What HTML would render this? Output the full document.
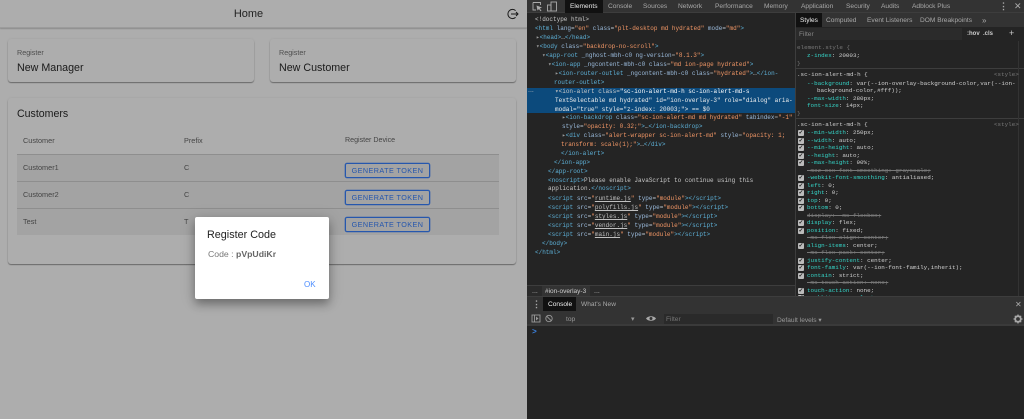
<!DOCTYPE html>
<html><head><meta charset="utf-8"><style>
*{box-sizing:border-box}
html,body{margin:0;padding:0;width:1024px;height:419px;overflow:hidden;background:#242424;font-family:"Liberation Sans",sans-serif}
.a{position:absolute;white-space:nowrap}
#left{position:absolute;left:0;top:0;width:527px;height:419px;background:#fff;overflow:hidden;filter:blur(.3px)}
.card{position:absolute;background:#fff;border-radius:3px;box-shadow:0 1px 1px rgba(0,0,0,.38),0 0 2px rgba(0,0,0,.08)}
.row{position:absolute;left:17px;width:482px;height:27px;background:#f0f0f0;border-top:1px solid #d2d2d2}
.btn{position:absolute;left:345px;width:85px;height:15px;border:1px solid #3880ff;border-radius:2px;color:#3880ff;font-size:7.2px;letter-spacing:.45px;text-align:center;line-height:13px;font-weight:500;box-shadow:0 0 0 .3px #3880ff}
.cell{position:absolute;font-size:7.3px;color:#666;white-space:nowrap}
#ov{position:absolute;left:0;top:0;width:527px;height:419px;background:rgba(0,0,0,.32)}
#dlg{position:absolute;left:195px;top:217px;width:134px;height:82px;background:#fff;border-radius:2px;box-shadow:0 5px 9px rgba(0,0,0,.3),0 2px 16px rgba(0,0,0,.15)}
#dev{position:absolute;left:527px;top:0;width:497px;height:419px;background:#242424;overflow:hidden;font-family:"Liberation Sans",sans-serif;filter:blur(.3px)}
.bar{position:absolute;background:#333}
.tab{position:absolute;font-size:6.6px;color:#a8a8a8;white-space:nowrap}
.m{position:absolute;font-family:"Liberation Mono",monospace;font-size:6px;line-height:9px;white-space:nowrap;color:#bdc6cf}
.t{color:#5db0d7}.n{color:#9bbbdc}.v{color:#f29766}.w{color:#c8c8c8}.l{color:#c0c0c0;text-decoration:underline}
.s{position:absolute;font-family:"Liberation Mono",monospace;font-size:5.9px;line-height:8px;white-space:nowrap;color:#d0d0d0;transform:translate(-1px,1px)}
.p{color:#35d4c7}.g{color:#777}.x{color:#777;text-decoration:line-through}
.c{position:absolute;left:2px;width:6px;height:6px;background:#bbb;border-radius:1px;color:#222;font-size:6px;line-height:6px;text-align:center;font-weight:bold;transform:translateY(1px)}
</style></head><body>
<div id="left">
<div class="a" style="left:0;top:0;width:527px;height:28px;background:#fff;border-bottom:1px solid #e6e6e6;box-shadow:0 1px 1px rgba(0,0,0,.2)"></div>
<div class="a" style="left:0;width:497px;top:8px;text-align:center;font-size:11px;line-height:13px;color:#333">Home</div>
<svg class="a" style="left:505px;top:6.500px" width="14" height="14" viewBox="0 0 14 14" fill="none" stroke="#222" stroke-width="1"><path d="M10.600 3.600A4.600 4.600 0 1 0 10.600 10.400"/><path d="M6 7H13M11 5L13 7L11 9"/></svg>
<div class="card" style="left:8px;top:39px;width:246px;height:43px"></div>
<div class="a" style="left:17px;top:48px;font-size:7.200px;color:#737373">Register</div>
<div class="a" style="left:17px;top:62px;font-size:10.700px;color:#2a2a2a">New Manager</div>
<div class="card" style="left:270px;top:39px;width:246px;height:43px"></div>
<div class="a" style="left:279px;top:48px;font-size:7.200px;color:#737373">Register</div>
<div class="a" style="left:279px;top:62px;font-size:10.700px;color:#2a2a2a">New Customer</div>
<div class="card" style="left:8px;top:98px;width:508px;height:166px"></div>
<div class="a" style="left:17px;top:108px;font-size:10.600px;color:#2a2a2a">Customers</div>
<div class="cell" style="left:23px;top:136px">Customer</div>
<div class="cell" style="left:184px;top:136px">Prefix</div>
<div class="cell" style="left:345px;top:136px;font-size:7.100px">Register Device</div>
<div class="row" style="top:154px"></div>
<div class="row" style="top:181px"></div>
<div class="row" style="top:208px"></div>
<div class="cell" style="left:23px;top:163px">Customer1</div>
<div class="cell" style="left:184px;top:163px">C</div>
<div class="btn" style="top:163px">GENERATE TOKEN</div>
<div class="cell" style="left:23px;top:190px">Customer2</div>
<div class="cell" style="left:184px;top:190px">C</div>
<div class="btn" style="top:190px">GENERATE TOKEN</div>
<div class="cell" style="left:23px;top:217px">Test</div>
<div class="cell" style="left:184px;top:217px">T</div>
<div class="btn" style="top:217px">GENERATE TOKEN</div>
<div id="ov"></div>
<div id="dlg">
<div class="a" style="left:12px;top:11.500px;font-size:10.800px;line-height:13px;color:#222">Register Code</div>
<div class="a" style="left:13px;top:32px;font-size:8.700px;line-height:10px;color:#777">Code : <b style="color:#666">pVpUdiKr</b></div>
<div class="a" style="left:109px;top:62.500px;font-size:8px;line-height:10px;color:#4d8dff">OK</div>
</div>
</div>
<div id="dev">
<div class="bar" style="left:0;top:0;width:497px;height:13px;border-bottom:1px solid #3d3d3d"></div>
<svg class="a" style="left:5px;top:1px" width="32" height="11" viewBox="0 0 32 11" fill="none" stroke="#aaa" stroke-width=".9"><path d="M1 1.500H8.500V4M1 1.500V9H4"/><path d="M4.500 4.500L10 6.500L7.800 7.500L9.500 9.800L8.500 10.300L7 8L5.500 9.500Z" fill="#aaa" stroke="none"/><rect x="19" y="1" width="5.500" height="9"/><rect x="15.500" y="4" width="3.500" height="6"/></svg>
<div class="a" style="left:38px;top:0;width:38px;height:13px;background:#111"></div>
<div class="tab" style="left:43px;top:2.500px;color:#eee">Elements</div>
<div class="tab" style="left:81px;top:2.500px">Console</div>
<div class="tab" style="left:116px;top:2.500px">Sources</div>
<div class="tab" style="left:151px;top:2.500px">Network</div>
<div class="tab" style="left:188px;top:2.500px">Performance</div>
<div class="tab" style="left:237px;top:2.500px">Memory</div>
<div class="tab" style="left:274px;top:2.500px">Application</div>
<div class="tab" style="left:319px;top:2.500px">Security</div>
<div class="tab" style="left:354px;top:2.500px">Audits</div>
<div class="tab" style="left:385px;top:2.500px">Adblock Plus</div>
<div class="a" style="left:472px;top:1px;font-size:9px;color:#aaa;font-weight:bold">&#8942;</div>
<div class="a" style="left:487px;top:1px;font-size:9px;color:#aaa">&#10005;</div>

<div class="a" style="left:0;top:88px;width:268px;height:25px;background:#0c4a7c"></div>
<div class="a" style="left:1px;top:87px;font-size:7px;color:#bbb">...</div>

<div class="m" style="left:8px;top:15px;color:#c8c8c8">&lt;!doctype html&gt;</div>
<div class="m" style="left:8px;top:24px"><span class="t">&lt;html</span> <span class="n">lang</span>=<span class="v">"en"</span> <span class="n">class</span>=<span class="v">"plt-desktop md hydrated"</span> <span class="n">mode</span>=<span class="v">"md"</span><span class="t">&gt;</span></div>
<div class="m" style="left:9px;top:33px;color:#999">&#9656;<span class="t">&lt;head&gt;</span><span class="w">&hellip;</span><span class="t">&lt;/head&gt;</span></div>
<div class="m" style="left:9px;top:42px;color:#999">&#9662;<span class="t">&lt;body</span> <span class="n">class</span>=<span class="v">"backdrop-no-scroll"</span><span class="t">&gt;</span></div>
<div class="m" style="left:15px;top:51px;color:#999">&#9662;<span class="t">&lt;app-root</span> <span class="n">_nghost-mbh-c0 ng-version</span>=<span class="v">"8.1.3"</span><span class="t">&gt;</span></div>
<div class="m" style="left:21px;top:60px;color:#999">&#9662;<span class="t">&lt;ion-app</span> <span class="n">_ngcontent-mbh-c0 class</span>=<span class="v">"md ion-page hydrated"</span><span class="t">&gt;</span></div>
<div class="m" style="left:28px;top:69px;color:#999">&#9656;<span class="t">&lt;ion-router-outlet</span> <span class="n">_ngcontent-mbh-c0 class</span>=<span class="v">"hydrated"</span><span class="t">&gt;</span><span class="w">&hellip;</span><span class="t">&lt;/ion-</span></div>
<div class="m t" style="left:27px;top:78px">router-outlet&gt;</div>
<div class="m" style="left:28px;top:87px;color:#ccc"><span style="color:#bbb">&#9662;</span><span class="w">&lt;ion-alert</span> class=<span style="color:#fff">"sc-ion-alert-md-h sc-ion-alert-md-s</span></div>
<div class="m" style="left:28px;top:96px;color:#eee">TextSelectable md hydrated" id="ion-overlay-3" role="dialog" aria-</div>
<div class="m" style="left:28px;top:105px;color:#eee">modal="true" style="z-index: 20003;"&gt; == $0</div>
<div class="m" style="left:35px;top:113px;color:#999">&#9656;<span class="t">&lt;ion-backdrop</span> <span class="n">class</span>=<span class="v">"sc-ion-alert-md md hydrated"</span> <span class="n">tabindex</span>=<span class="v">"-1"</span></div>
<div class="m" style="left:35px;top:122px"><span class="n">style</span>=<span class="v">"opacity: 0.32;"</span><span class="t">&gt;</span><span class="w">&hellip;</span><span class="t">&lt;/ion-backdrop&gt;</span></div>
<div class="m" style="left:35px;top:131px;color:#999">&#9656;<span class="t">&lt;div</span> <span class="n">class</span>=<span class="v">"alert-wrapper sc-ion-alert-md"</span> <span class="n">style</span>=<span class="v">"opacity: 1;</span></div>
<div class="m" style="left:34px;top:140px"><span class="v">transform: scale(1);"</span><span class="t">&gt;</span><span class="w">&hellip;</span><span class="t">&lt;/div&gt;</span></div>
<div class="m t" style="left:34px;top:149px">&lt;/ion-alert&gt;</div>
<div class="m t" style="left:27px;top:158px">&lt;/ion-app&gt;</div>
<div class="m t" style="left:21px;top:167px">&lt;/app-root&gt;</div>
<div class="m" style="left:21px;top:176px"><span class="t">&lt;noscript&gt;</span><span class="w">Please enable JavaScript to continue using this</span></div>
<div class="m" style="left:21px;top:184px"><span class="w">application.</span><span class="t">&lt;/noscript&gt;</span></div>
<div class="m" style="left:21px;top:194px"><span class="t">&lt;script</span> <span class="n">src</span>=<span class="v">"</span><span class="l">runtime.js</span><span class="v">"</span> <span class="n">type</span>=<span class="v">"module"</span><span class="t">&gt;&lt;/script&gt;</span></div>
<div class="m" style="left:21px;top:203px"><span class="t">&lt;script</span> <span class="n">src</span>=<span class="v">"</span><span class="l">polyfills.js</span><span class="v">"</span> <span class="n">type</span>=<span class="v">"module"</span><span class="t">&gt;&lt;/script&gt;</span></div>
<div class="m" style="left:21px;top:212px"><span class="t">&lt;script</span> <span class="n">src</span>=<span class="v">"</span><span class="l">styles.js</span><span class="v">"</span> <span class="n">type</span>=<span class="v">"module"</span><span class="t">&gt;&lt;/script&gt;</span></div>
<div class="m" style="left:21px;top:221px"><span class="t">&lt;script</span> <span class="n">src</span>=<span class="v">"</span><span class="l">vendor.js</span><span class="v">"</span> <span class="n">type</span>=<span class="v">"module"</span><span class="t">&gt;&lt;/script&gt;</span></div>
<div class="m" style="left:21px;top:230px"><span class="t">&lt;script</span> <span class="n">src</span>=<span class="v">"</span><span class="l">main.js</span><span class="v">"</span> <span class="n">type</span>=<span class="v">"module"</span><span class="t">&gt;&lt;/script&gt;</span></div>
<div class="m t" style="left:15px;top:239px">&lt;/body&gt;</div>
<div class="m t" style="left:8px;top:248px">&lt;/html&gt;</div>

<div class="a" style="left:0;top:285px;width:268px;height:12px;background:#2a2a2a;border-top:1px solid #3d3d3d"></div>
<div class="a" style="left:5px;top:288px;font-size:7px;color:#bbb">...</div>
<div class="a" style="left:15px;top:286px;width:48px;height:11px;background:#333"></div>
<div class="a" style="left:18px;top:288px;font-size:6.500px;color:#ccc">#ion-overlay-3</div>
<div class="a" style="left:67px;top:288px;font-size:7px;color:#bbb">...</div>

<!-- styles pane -->
<div id="sty" style="position:absolute;left:268px;top:13px;width:229px;height:284px;background:#242424;border-left:1px solid #3d3d3d;overflow:hidden">
<div style="position:absolute;left:0;top:0;width:229px;height:14px;background:#333"></div>
<div style="position:absolute;left:0;top:0;width:26px;height:14px;background:#111"></div>
<div class="tab" style="left:4px;top:4px;color:#eee">Styles</div>
<div class="tab" style="left:30px;top:4px">Computed</div>
<div class="tab" style="left:71px;top:4px">Event Listeners</div>
<div class="tab" style="left:124px;top:4px">DOM Breakpoints</div>
<div class="tab" style="left:186px;top:3px;font-size:8px">&#187;</div>
<div style="position:absolute;left:0;top:15px;width:166px;height:12px;background:#2b2b2b"></div>
<div class="tab" style="left:3px;top:18px;color:#888">Filter</div>
<div class="tab" style="left:171px;top:18px;color:#ccc;font-weight:bold;font-size:6px">:hov</div>
<div class="tab" style="left:187px;top:18px;color:#ccc;font-weight:bold;font-size:6px">.cls</div>
<div class="tab" style="left:213px;top:15px;color:#ccc;font-size:9px">+</div>
<div style="position:absolute;left:0;top:55px;width:229px;height:1px;background:#3d3d3d"></div>
<div style="position:absolute;left:0;top:105px;width:229px;height:1px;background:#3d3d3d"></div>
<div style="position:absolute;left:222px;top:28px;width:1px;height:256px;background:#333"></div>

<div class="s g" style="left:2px;top:30px">element.style {</div>
<div class="s" style="left:12px;top:38px"><span class="p">z-index</span>: 20003;</div>
<div class="s g" style="left:2px;top:46px">}</div>
<div class="s" style="left:2px;top:57px">.sc-ion-alert-md-h {</div><div class="s g" style="left:199px;top:57px">&lt;style&gt;</div>
<div class="s" style="left:12px;top:66px"><span class="p">--background</span>: var(--ion-overlay-background-color,var(--ion-</div>
<div class="s" style="left:22px;top:73px">background-color,#fff));</div>
<div class="s" style="left:12px;top:81px"><span class="p">--max-width</span>: 280px;</div>
<div class="s" style="left:12px;top:88px"><span class="p">font-size</span>: 14px;</div>
<div class="s g" style="left:2px;top:96px">}</div>
<div class="s" style="left:2px;top:107px">.sc-ion-alert-md-h {</div><div class="s g" style="left:199px;top:107px">&lt;style&gt;</div>

<div class="c" style="top:116px">&#10003;</div><div class="s" style="left:12px;top:115px"><span class="p">--min-width</span>: 250px;</div>
<div class="c" style="top:124px">&#10003;</div><div class="s" style="left:12px;top:123px"><span class="p">--width</span>: auto;</div>
<div class="c" style="top:131px">&#10003;</div><div class="s" style="left:12px;top:130px"><span class="p">--min-height</span>: auto;</div>
<div class="c" style="top:139px">&#10003;</div><div class="s" style="left:12px;top:138px"><span class="p">--height</span>: auto;</div>
<div class="c" style="top:146px">&#10003;</div><div class="s" style="left:12px;top:145px"><span class="p">--max-height</span>: 90%;</div>
<div class="s x" style="left:12px;top:153px">-moz-osx-font-smoothing: grayscale;</div>
<div class="c" style="top:161px">&#10003;</div><div class="s" style="left:12px;top:160px"><span class="p">-webkit-font-smoothing</span>: antialiased;</div>
<div class="c" style="top:169px">&#10003;</div><div class="s" style="left:12px;top:168px"><span class="p">left</span>: 0;</div>
<div class="c" style="top:176px">&#10003;</div><div class="s" style="left:12px;top:175px"><span class="p">right</span>: 0;</div>
<div class="c" style="top:184px">&#10003;</div><div class="s" style="left:12px;top:183px"><span class="p">top</span>: 0;</div>
<div class="c" style="top:191px">&#10003;</div><div class="s" style="left:12px;top:190px"><span class="p">bottom</span>: 0;</div>
<div class="s x" style="left:12px;top:198px">display: -ms-flexbox;</div>
<div class="c" style="top:206px">&#10003;</div><div class="s" style="left:12px;top:205px"><span class="p">display</span>: flex;</div>
<div class="c" style="top:214px">&#10003;</div><div class="s" style="left:12px;top:213px"><span class="p">position</span>: fixed;</div>
<div class="s x" style="left:12px;top:220px">-ms-flex-align: center;</div>
<div class="c" style="top:229px">&#10003;</div><div class="s" style="left:12px;top:228px"><span class="p">align-items</span>: center;</div>
<div class="s x" style="left:12px;top:235px">-ms-flex-pack: center;</div>
<div class="c" style="top:244px">&#10003;</div><div class="s" style="left:12px;top:243px"><span class="p">justify-content</span>: center;</div>
<div class="c" style="top:251px">&#10003;</div><div class="s" style="left:12px;top:250px"><span class="p">font-family</span>: var(--ion-font-family,inherit);</div>
<div class="c" style="top:259px">&#10003;</div><div class="s" style="left:12px;top:258px"><span class="p">contain</span>: strict;</div>
<div class="s x" style="left:12px;top:265px">-ms-touch-action: none;</div>
<div class="c" style="top:274px">&#10003;</div><div class="s" style="left:12px;top:273px"><span class="p">touch-action</span>: none;</div>
<div class="c" style="top:281px">&#10003;</div><div class="s" style="left:12px;top:280px"><span class="p">-webkit-user-select</span>: none;</div>
</div>

<!-- drawer -->
<div class="bar" style="left:0;top:296px;width:497px;height:16px;border-top:1px solid #3d3d3d"></div>
<div class="a" style="left:5px;top:299px;font-size:9px;color:#aaa;font-weight:bold">&#8942;</div>
<div class="a" style="left:16px;top:297px;width:33px;height:14px;background:#111"></div>
<div class="tab" style="left:21px;top:301px;color:#eee">Console</div>
<div class="tab" style="left:54px;top:301px">What's New</div>
<div class="a" style="left:488px;top:300px;font-size:8px;color:#aaa">&#10005;</div>
<div class="bar" style="left:0;top:312px;width:497px;height:14px;border-bottom:2px solid #3a3a3a"></div>
<svg class="a" style="left:4px;top:313px" width="24" height="11" viewBox="0 0 24 11" fill="none" stroke="#999" stroke-width=".9"><rect x="1" y="2" width="8" height="7"/><path d="M3.500 2V9"/><path d="M5 3.500L7.500 5.500L5 7.500Z" fill="#999" stroke="none"/><circle cx="18" cy="5.500" r="3.200"/><path d="M15.800 3.300L20.200 7.700"/></svg>
<div class="tab" style="left:39px;top:316px;color:#999">top</div>
<div class="a" style="left:104px;top:315px;font-size:7px;color:#999">&#9662;</div>
<svg class="a" style="left:118px;top:314px" width="12" height="9" viewBox="0 0 12 9"><path d="M1 4.500C3 1.500 9 1.500 11 4.500C9 7.500 3 7.500 1 4.500Z" fill="#aaa"/><circle cx="6" cy="4.500" r="1.500" fill="#333"/></svg>
<div class="a" style="left:137px;top:314px;width:109px;height:10px;background:#2a2a2a"></div>
<div class="tab" style="left:139px;top:316px;color:#777">Filter</div>
<div class="tab" style="left:250px;top:316px;color:#999">Default levels &#9662;</div>
<svg class="a" style="left:486px;top:314px" width="10" height="10" viewBox="0 0 10 10"><circle cx="5" cy="5" r="2.800" fill="none" stroke="#a8a8a8" stroke-width="1.800"/><path d="M5 .5V2M5 8V9.500M.5 5H2M8 5H9.500M1.800 1.800L2.800 2.800M7.200 7.200L8.200 8.200M8.200 1.800L7.200 2.800M2.800 7.200L1.800 8.200" stroke="#a8a8a8" stroke-width="1.200"/></svg>
<div class="a" style="left:5px;top:328px;font-family:'Liberation Mono',monospace;font-size:8px;color:#3b82e0;font-weight:bold">&gt;</div>
</div>
</body></html>
